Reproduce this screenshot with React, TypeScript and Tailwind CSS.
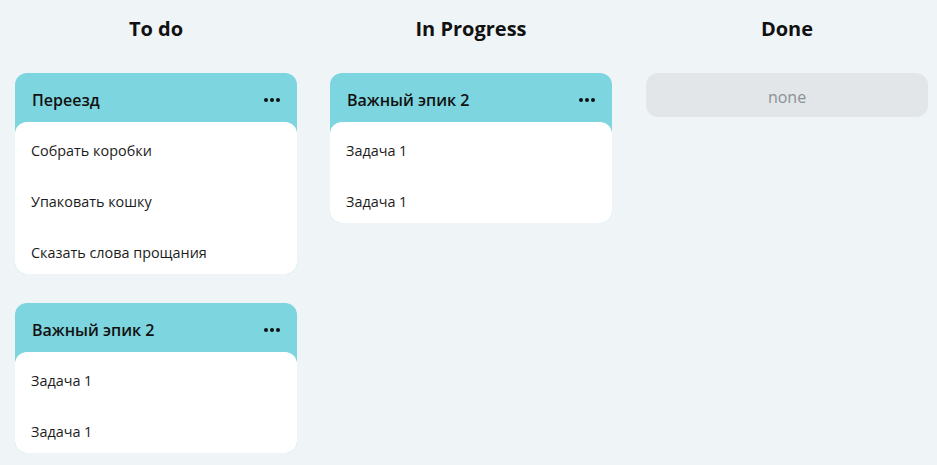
import React from 'react';

type Epic = { title: string; tasks: string[] };

const columns: { name: string; epics: Epic[] }[] = [
  {
    name: 'To do',
    epics: [
      { title: 'Переезд', tasks: ['Собрать коробки', 'Упаковать кошку', 'Сказать слова прощания'] },
      { title: 'Важный эпик 2', tasks: ['Задача 1', 'Задача 1'] },
    ],
  },
  {
    name: 'In Progress',
    epics: [{ title: 'Важный эпик 2', tasks: ['Задача 1', 'Задача 1'] }],
  },
  { name: 'Done', epics: [] },
];

function Dots() {
  return (
    <div className="flex items-center gap-[2px]">
      <span className="w-[4px] h-[4px] rounded-full bg-[#111]" />
      <span className="w-[4px] h-[4px] rounded-full bg-[#111]" />
      <span className="w-[4px] h-[4px] rounded-full bg-[#111]" />
    </div>
  );
}

function EpicCard({ epic }: { epic: Epic }) {
  return (
    <div className="rounded-xl bg-[#7dd5df]">
      <div className="h-[49px] flex items-start justify-between pt-[15px] pl-[17px] pr-[17px]">
        <span className="text-[16px] leading-6 font-semibold text-[#111]">{epic.title}</span>
        <div className="pt-[10px]">
          <Dots />
        </div>
      </div>
      <div className="bg-white rounded-xl pt-[19px] pb-[11px] pl-[16px] flex flex-col gap-[31px]">
        {epic.tasks.map((t, i) => (
          <div key={i} className="h-[20px] leading-5 text-[14.4px] text-[#1c1c1c]">
            {t}
          </div>
        ))}
      </div>
    </div>
  );
}

export default function App() {
  return (
    <div
      className="min-h-[465px] bg-[#eff4f7] pl-[15px] pt-[15px]"
      style={{ fontFamily: '"Open Sans", "Noto Sans", sans-serif' }}
    >
      <div className="grid grid-cols-[282px_282px_283px] gap-x-[33px]">
        {columns.map((col, ci) => (
          <div key={col.name} className={ci === 2 ? 'flex flex-col ml-[1px]' : 'flex flex-col'}>
            <h2 className="text-center text-[20px] leading-7 font-bold text-[#111] mb-[30px]">{col.name}</h2>
            <div className="flex flex-col gap-[29px]">
              {col.epics.length === 0 ? (
                <div className="h-[44px] rounded-xl bg-[#e2e6e9] flex items-center justify-center pt-[3px] text-[16px] text-[#8b9095]">
                  none
                </div>
              ) : (
                col.epics.map((e, i) => <EpicCard key={i} epic={e} />)
              )}
            </div>
          </div>
        ))}
      </div>
    </div>
  );
}
